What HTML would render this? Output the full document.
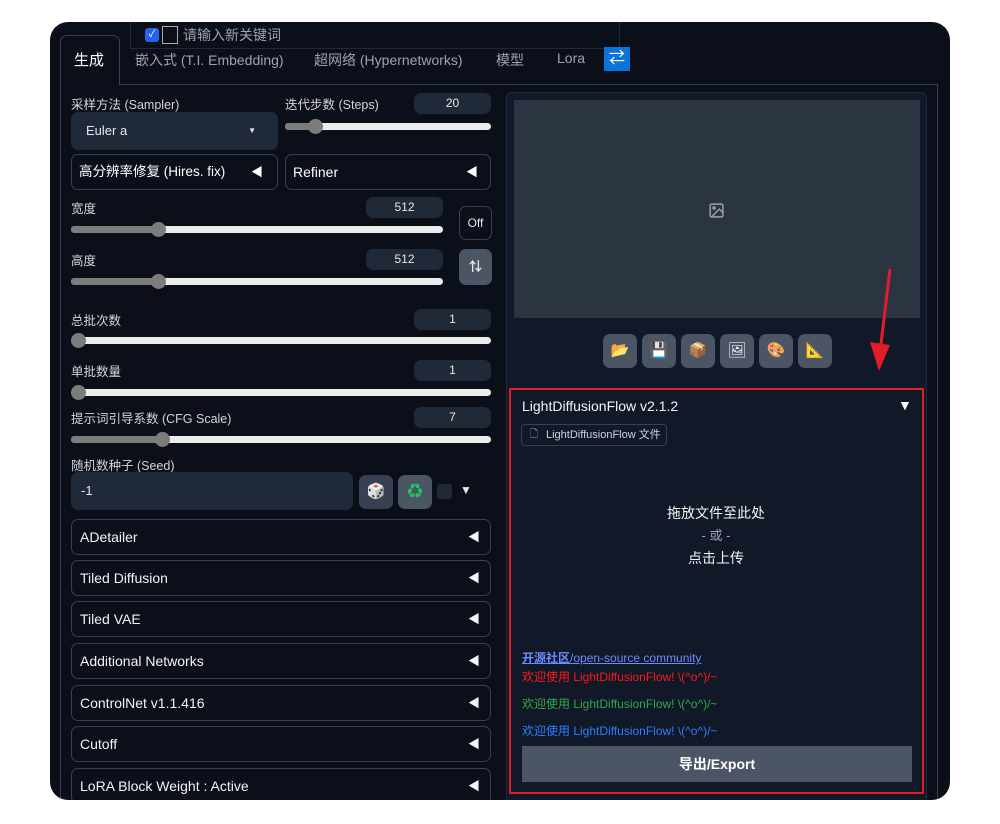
<!DOCTYPE html>
<html><head><meta charset="utf-8"><style>
*{box-sizing:border-box;margin:0;padding:0}
body{width:1000px;height:824px;background:#fff;position:relative;overflow:hidden;font-family:"Liberation Sans","Noto Sans CJK SC",sans-serif;color:#e5e7eb}
.a{position:absolute}
#p{left:50px;top:22px;width:900px;height:778px;background:#0b0f19;border-radius:18px;overflow:hidden}
.lbl{font-size:12.5px;color:#d1d5db}
.num{background:#1f2937;border-radius:7px;font-size:12px;text-align:center;line-height:21px;height:21px;width:77px;color:#e5e7eb}
.tr{height:7px;border-radius:4px;background:#ececec;overflow:visible}
.tr i{position:absolute;left:0;top:0;height:7px;border-radius:4px;background:#7c7c7c}
.tr b{position:absolute;top:-4px;width:15px;height:15px;border-radius:50%;background:#7c7c7c}
.acc{left:21px;width:420px;height:36px;border:1px solid #374151;border-radius:7px;font-size:14px;line-height:34px;padding-left:8px;color:#f3f4f6}
.acc:after{content:"◀";position:absolute;right:10px;top:0;font-size:12px}
.btn{width:34px;height:34px;background:#4b5563;border-radius:7px;text-align:center;line-height:34px;font-size:15px}
</style></head><body>
<div id="p" class="a">
 <div class="a" style="left:80px;top:0;width:490px;height:27px;border:1px solid #1f2937;border-top:none"></div>
 <div class="a" style="left:95px;top:6px;width:14px;height:14px;background:#2563eb;border-radius:3px;color:#fff;font-size:10px;text-align:center;line-height:14px">✓</div>
 <div class="a" style="left:112px;top:4px;width:16px;height:18px;border:1px solid #aaa"></div>
 <div class="a" style="left:133px;top:3px;font-size:14px;color:#9ca3af">请输入新关键词</div>
 <div class="a" style="left:10px;top:13px;width:60px;height:50px;border:1px solid #374151;border-bottom:none;border-radius:7px 7px 0 0;background:#0b0f19;z-index:2"></div>
 <div class="a" style="left:10px;top:62px;width:878px;height:1px;background:#374151"></div>
 <div class="a" style="left:10px;top:62px;width:1px;height:716px;background:#374151"></div>
 <div class="a" style="left:887px;top:62px;width:1px;height:716px;background:#374151"></div>
 <div class="a" style="left:24px;top:27px;font-size:15px;color:#fff;z-index:3">生成</div>
 <div class="a" style="left:85px;top:28px;font-size:14px;color:#9ca3af">嵌入式 (T.I. Embedding)</div>
 <div class="a" style="left:264px;top:28px;font-size:14px;color:#9ca3af">超网络 (Hypernetworks)</div>
 <div class="a" style="left:446px;top:28px;font-size:14px;color:#9ca3af">模型</div>
 <div class="a" style="left:507px;top:28px;font-size:14px;color:#9ca3af">Lora</div>
 <div class="a" style="left:554px;top:25px;width:26px;height:24px;background:#0b74da;color:#fff;text-align:center;line-height:24px;font-size:16px">⇄</div>

 <div class="a lbl" style="left:21px;top:72px">采样方法 (Sampler)</div>
 <div class="a" style="left:21px;top:90px;width:207px;height:38px;background:#1f2937;border-radius:7px;font-size:13px;line-height:38px;padding-left:15px">Euler a<span class="a" style="right:22px;top:0;font-size:8px">▼</span></div>
 <div class="a lbl" style="left:235px;top:72px">迭代步数 (Steps)</div>
 <div class="a num" style="left:364px;top:71px">20</div>
 <div class="a tr" style="left:235px;top:101px;width:206px"><i style="width:30px"></i><b style="left:23px"></b></div>

 <div class="a" style="left:21px;top:132px;width:207px;height:36px;border:1px solid #374151;border-radius:7px;font-size:13.5px;line-height:34px;padding-left:7px;color:#fff">高分辨率修复 (Hires. fix)<span class="a" style="right:14px;font-size:12px">◀</span></div>
 <div class="a" style="left:235px;top:132px;width:206px;height:36px;border:1px solid #374151;border-radius:7px;font-size:14px;line-height:34px;padding-left:7px;color:#fff">Refiner<span class="a" style="right:12px;font-size:12px">◀</span></div>

 <div class="a lbl" style="left:21px;top:176px">宽度</div>
 <div class="a num" style="left:316px;top:175px">512</div>
 <div class="a tr" style="left:21px;top:204px;width:372px"><i style="width:90px"></i><b style="left:80px"></b></div>
 <div class="a" style="left:409px;top:184px;width:33px;height:34px;border:1px solid #374151;border-radius:7px;font-size:12px;text-align:center;line-height:32px">Off</div>
 <div class="a lbl" style="left:21px;top:228px">高度</div>
 <div class="a num" style="left:316px;top:227px">512</div>
 <div class="a tr" style="left:21px;top:256px;width:372px"><i style="width:90px"></i><b style="left:80px"></b></div>
 <div class="a" style="left:409px;top:227px;width:33px;height:36px;background:#4b5563;border-radius:7px;font-size:13px;text-align:center;line-height:36px;font-weight:bold">⇅</div>

 <div class="a lbl" style="left:21px;top:288px">总批次数</div>
 <div class="a num" style="left:364px;top:287px">1</div>
 <div class="a tr" style="left:21px;top:315px;width:420px"><b style="left:0"></b></div>
 <div class="a lbl" style="left:21px;top:339px">单批数量</div>
 <div class="a num" style="left:364px;top:338px">1</div>
 <div class="a tr" style="left:21px;top:367px;width:420px"><b style="left:0"></b></div>
 <div class="a lbl" style="left:21px;top:386px">提示词引导系数 (CFG Scale)</div>
 <div class="a num" style="left:364px;top:385px">7</div>
 <div class="a tr" style="left:21px;top:414px;width:420px"><i style="width:92px"></i><b style="left:84px"></b></div>

 <div class="a lbl" style="left:21px;top:433px">随机数种子 (Seed)</div>
 <div class="a" style="left:21px;top:450px;width:282px;height:38px;background:#1f2937;border-radius:7px;font-size:13px;line-height:38px;padding-left:10px">-1</div>
 <div class="a btn" style="left:309px;top:453px;background:#374151">🎲</div>
 <div class="a btn" style="left:348px;top:453px;color:#22c55e">♻</div>
 <div class="a" style="left:387px;top:462px;width:15px;height:15px;background:#1f2937;border-radius:3px"></div>
 <div class="a" style="left:410px;top:461px;font-size:12px">▼</div>

 <div class="a acc" style="top:497px">ADetailer</div>
 <div class="a acc" style="top:538px">Tiled Diffusion</div>
 <div class="a acc" style="top:579px">Tiled VAE</div>
 <div class="a acc" style="top:621px">Additional Networks</div>
 <div class="a acc" style="top:663px">ControlNet v1.1.416</div>
 <div class="a acc" style="top:704px">Cutoff</div>
 <div class="a acc" style="top:746px">LoRA Block Weight : Active</div>

 <div class="a" style="left:456px;top:70px;width:421px;height:720px;background:#111827;border:1px solid #1f2937;border-radius:6px"></div>
 <div class="a" style="left:464px;top:78px;width:406px;height:218px;background:#2b3441"></div>
 <svg class="a" style="left:658px;top:180px" width="17" height="17" viewBox="0 0 24 24" fill="none" stroke="#9ca3af" stroke-width="2"><rect x="3" y="3" width="18" height="18" rx="2"/><circle cx="8.5" cy="8.5" r="1.5"/><path d="M21 15l-5-5L5 21"/></svg>
 <div class="a btn" style="left:553px;top:312px">📂</div>
 <div class="a btn" style="left:592px;top:312px">💾</div>
 <div class="a btn" style="left:631px;top:312px">📦</div>
 <div class="a btn" style="left:670px;top:312px">🖼</div>
 <div class="a btn" style="left:709px;top:312px">🎨</div>
 <div class="a btn" style="left:748px;top:312px">📐</div>
 <svg class="a" style="left:815px;top:245px" width="30" height="105"><line x1="25" y1="2" x2="15" y2="85" stroke="#e11d2a" stroke-width="3"/><path d="M5 75 L14 104 L25 78 Z" fill="#e11d2a"/></svg>
 <div class="a" style="left:459px;top:366px;width:415px;height:406px;border:2px solid #e11d2a"></div>
 <div class="a" style="left:472px;top:376px;font-size:14px;color:#f3f4f6">LightDiffusionFlow v2.1.2</div>
 <div class="a" style="left:848px;top:375px;font-size:14px;color:#fff">▼</div>
 <div class="a" style="left:471px;top:402px;width:146px;height:22px;border:1px solid #374151;border-radius:4px;font-size:11px;line-height:20px;padding-left:24px;color:#d1d5db">LightDiffusionFlow 文件<span class="a" style="left:8px;top:0;font-size:10px;color:#9ca3af">🗋</span></div>
 <div class="a" style="left:466px;top:480px;width:400px;text-align:center;font-size:14px;line-height:22px;color:#f3f4f6">拖放文件至此处<br><span style="font-size:13px;color:#9ca3af">- 或 -</span><br>点击上传</div>
 <div class="a" style="left:472px;top:627px;font-size:12px;color:#6b8cff;text-decoration:underline"><b>开源社区</b>/open-source community</div>
 <div class="a" style="left:472px;top:646px;font-size:12px;color:#ff1a1a">欢迎使用 LightDiffusionFlow! \(^o^)/~</div>
 <div class="a" style="left:472px;top:673px;font-size:12px;color:#2ea84f">欢迎使用 LightDiffusionFlow! \(^o^)/~</div>
 <div class="a" style="left:472px;top:700px;font-size:12px;color:#2b7fff">欢迎使用 LightDiffusionFlow! \(^o^)/~</div>
 <div class="a" style="left:472px;top:724px;width:390px;height:36px;background:#4b5563;font-size:14px;font-weight:bold;text-align:center;line-height:36px;color:#fff">导出/Export</div>
</div>
</body></html>
